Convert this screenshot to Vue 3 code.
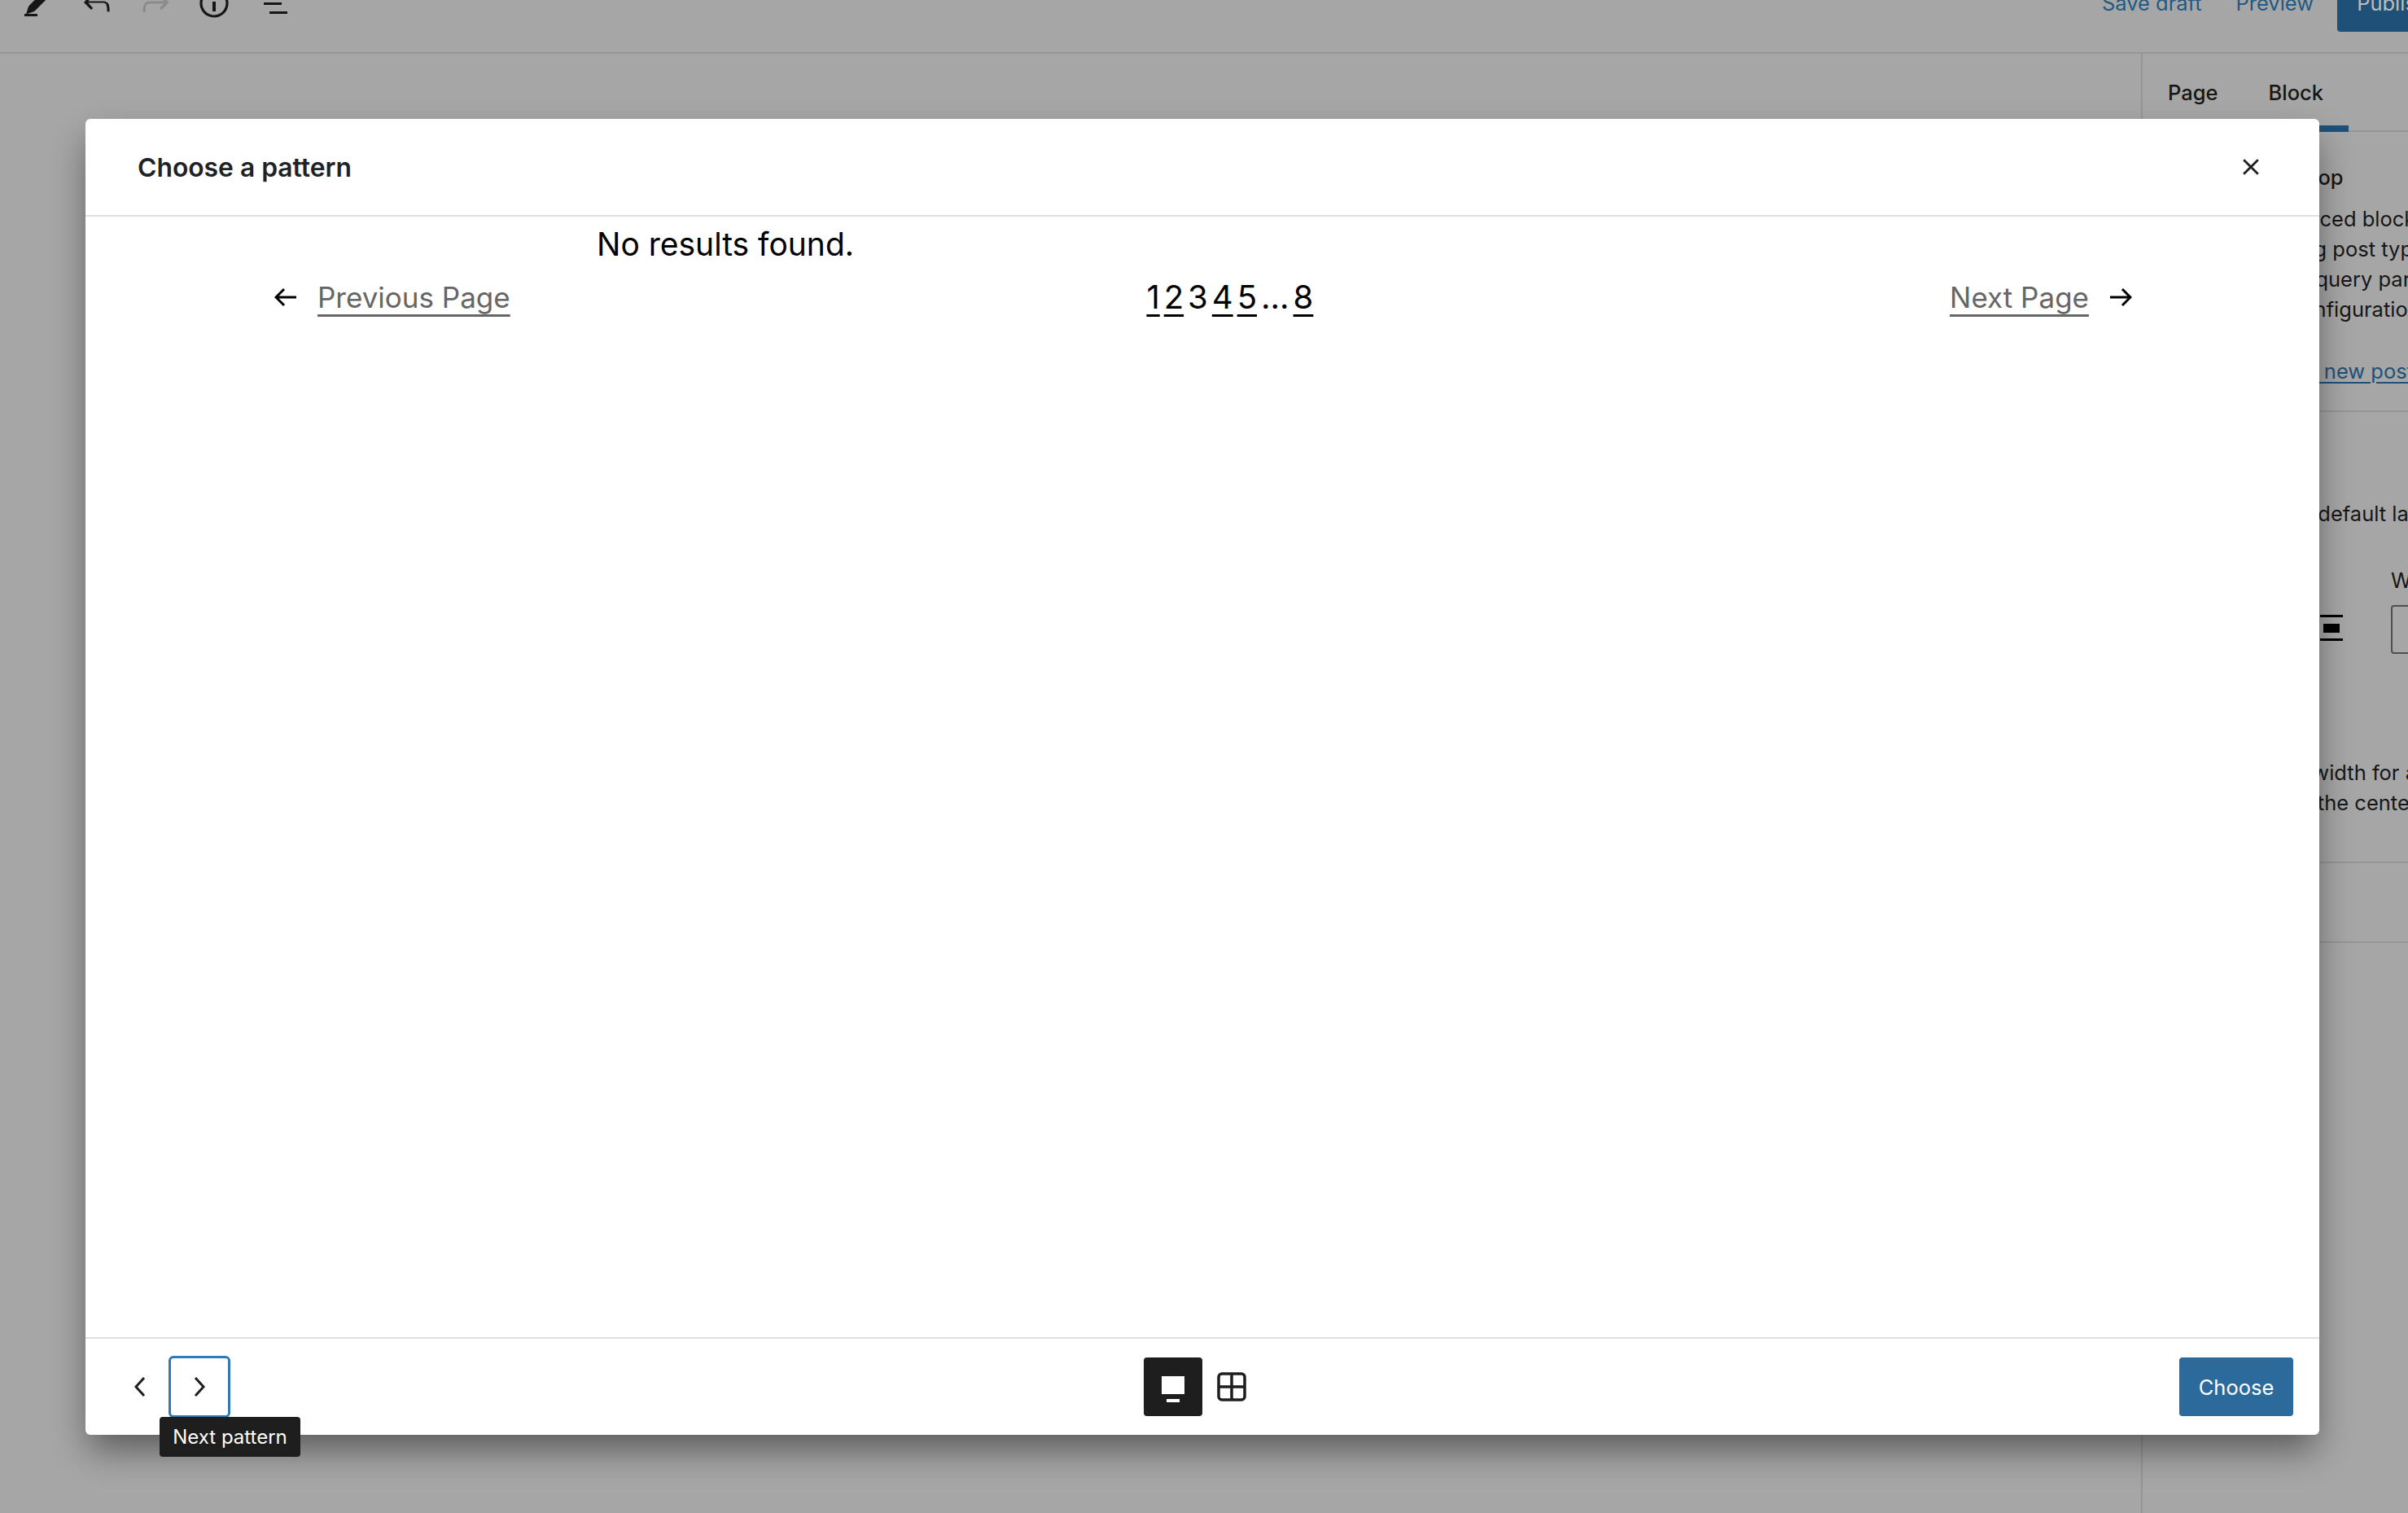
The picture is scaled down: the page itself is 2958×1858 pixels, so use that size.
<script setup>
const toolIcons = [
  { id: 'edit', d: 'M4 20h8v-1.5H4V20zM18.9 3.5c-.6-.6-1.5-.6-2.1 0L7.2 13.1c-.4.4-.7.9-.9 1.5L5 18.7l4.1-1.3c.6-.2 1.1-.5 1.5-.9l9.6-9.6c.6-.6.6-1.5 0-2.1l-1.3-1.3z' },
  { id: 'undo', d: 'M18.3 11.7c-.6-.6-1.4-.9-2.3-.9H6.7l2.9-3.3-1.1-1-4.5 5L8.5 16l1.1-1-2.9-3.2H16c.5 0 .9.2 1.3.5 1 1 1 3.4 1 4.5v.3h1.5v-.2c0-1.5 0-4.3-1.5-5.7z' },
  { id: 'redo', d: 'M15.6 6.5l-1.1 1 2.9 3.3H8c-.9 0-1.7.3-2.3.9-1.4 1.5-1.4 4.2-1.4 5.6v.2h1.5v-.3c0-1.1 0-3.5 1-4.5.3-.3.7-.5 1.3-.5h9.2L14.5 15l1.1 1.1 4.6-4.6-4.6-5z', muted: true },
  { id: 'info', d: 'M12 3.2c-4.8 0-8.8 3.9-8.8 8.8 0 4.8 3.9 8.8 8.8 8.8 4.8 0 8.8-3.9 8.8-8.8 0-4.8-4-8.8-8.8-8.8zm0 16c-4 0-7.2-3.3-7.2-7.2C4.8 8 8 4.8 12 4.8s7.2 3.3 7.2 7.2c0 4-3.2 7.2-7.2 7.2zM11 17h2v-6h-2v6zm0-8h2V7h-2v2z' },
  { id: 'list', d: 'M3 6h11v1.5H3V6Zm3.5 5.5h11V13h-11v-1.5ZM21 17H10v1.5h11V17Z' }
]
const pages = [
  { label: '1', link: true },
  { label: '2', link: true },
  { label: '3', link: false },
  { label: '4', link: true },
  { label: '5', link: true },
  { label: '...', link: false },
  { label: '8', link: true }
]
const descLines = [
  'An advanced block that allows',
  'displaying post types based on',
  'different query parameters and',
  'visual configurations.'
]
</script>

<template>
  <div class="page">
    <header class="topbar">
      <div class="tools">
        <svg v-for="icon in toolIcons" :key="icon.id" class="tool" :class="{ muted: icon.muted }" viewBox="0 0 24 24" width="48" height="48">
          <path :d="icon.d" />
        </svg>
      </div>
      <div class="actions">
        <span class="action">Save draft</span>
        <span class="action">Preview</span>
        <span class="publish">Publish</span>
      </div>
    </header>

    <div class="workspace">
      <main class="canvas"></main>
      <aside class="sidebar">
        <div class="tabs">
          <span class="tab">Page</span>
          <span class="tab active">Block</span>
        </div>
        <section class="card">
          <h2 class="card-title">Query Loop</h2>
          <p v-for="line in descLines" :key="line" class="line">{{ line }}</p>
          <a class="create">Create a new post</a>
        </section>
        <section class="layout-panel">
          <p class="line layout-note">Inner items use default layout</p>
          <div class="width-label">Width</div>
          <div class="layout-row">
            <svg class="justify" viewBox="0 0 28 32" width="28" height="32">
              <rect x="0" y="0" width="28" height="3" />
              <rect x="4" y="11" width="20" height="11" />
              <rect x="0" y="29" width="28" height="3" />
            </svg>
            <div class="width-input"></div>
          </div>
          <p class="line help">Customize the width for all elements that</p>
          <p class="line help-next">are assigned to the center or wide columns.</p>
        </section>
        <section class="empty-panel"></section>
      </aside>
    </div>

    <div class="modal" role="dialog">
      <div class="modal-head">
        <h1 class="modal-title">Choose a pattern</h1>
        <svg class="close" viewBox="0 0 20 20" width="20" height="20">
          <path d="M1.2 1.2l17.6 17.6M18.8 1.2L1.2 18.8" />
        </svg>
      </div>

      <div class="modal-body">
        <p class="empty">No results found.</p>
        <nav class="pager">
          <div class="pager-side">
            <svg class="arrow" viewBox="0 0 28 24" width="28" height="24">
              <path d="M27 12H2M12 2 2 12l10 10" />
            </svg>
            <a class="pager-link">Previous Page</a>
          </div>
          <div class="numbers">
            <span v-for="p in pages" :key="p.label" class="num" :class="{ link: p.link }">{{ p.label }}</span>
          </div>
          <div class="pager-side">
            <a class="pager-link">Next Page</a>
            <svg class="arrow" viewBox="0 0 28 24" width="28" height="24">
              <path d="M1 12h25M16 2l10 10-10 10" />
            </svg>
          </div>
        </nav>
      </div>

      <footer class="modal-foot">
        <div class="foot-left">
          <span class="nav-btn">
            <svg class="chevron prev" viewBox="0 0 14 26" width="14" height="26"><path d="M12 2 2 13l10 11" /></svg>
          </span>
          <span class="nav-btn focused">
            <svg class="chevron" viewBox="0 0 14 26" width="14" height="26"><path d="M2 2l10 11L2 24" /></svg>
            <span class="tooltip">Next pattern</span>
          </span>
        </div>
        <div class="foot-center">
          <span class="view-btn selected">
            <svg viewBox="0 0 28 32" width="28" height="32">
              <rect x="0" y="0" width="28" height="22" fill="#fff" />
              <rect x="6" y="28" width="16" height="4" fill="#fff" />
            </svg>
          </span>
          <span class="view-btn">
            <svg class="grid-icon" viewBox="0 0 36 36" width="36" height="36">
              <rect x="2" y="2" width="32" height="32" rx="4" />
              <path d="M18 2v32M2 18h32" />
            </svg>
          </span>
        </div>
        <div class="foot-right">
          <button class="choose" type="button">Choose</button>
        </div>
      </footer>
    </div>
  </div>
</template>

<style scoped>
.page {
  position: relative;
  width: 2958px;
  height: 1858px;
  overflow: hidden;
  background: #a6a6a6;
  font-family: Inter, "Liberation Sans", sans-serif;
  color: #161616;
  display: flex;
  flex-direction: column;
}
.topbar {
  height: 66px;
  flex: none;
  box-sizing: border-box;
  border-bottom: 2px solid #959595;
  display: flex;
  justify-content: space-between;
  align-items: flex-start;
  overflow: hidden;
}
.tools {
  display: flex;
  gap: 24px;
  padding-left: 22px;
  margin-top: -20px;
}
.tool {
  fill: #161616;
  flex: none;
}
.tool:first-child {
  margin-right: 1px;
}
.tool.muted {
  fill: #8b8b8b;
}
.actions {
  display: flex;
  align-items: flex-start;
  margin-top: -14px;
  margin-right: -49px;
}
.action {
  font-size: 25.5px;
  line-height: 36px;
  color: #205a85;
  margin-right: 42px;
}
.publish {
  background: #1f5077;
  color: #bdbdbd;
  font-size: 25.5px;
  line-height: 36px;
  padding: 0 24px 17px;
  border-radius: 4px;
  margin-left: -13px;
}
.workspace {
  flex: 1;
  display: flex;
  min-height: 0;
}
.canvas {
  flex: 1;
}
.sidebar {
  width: 328px;
  flex: none;
  box-sizing: border-box;
  border-left: 2px solid #959595;
  display: flex;
  flex-direction: column;
}
.tabs {
  height: 96px;
  flex: none;
  box-sizing: border-box;
  border-bottom: 2px solid #959595;
  display: flex;
}
.tab {
  padding: 0 31px;
  line-height: 96px;
  font-size: 25.5px;
  font-weight: 500;
  white-space: nowrap;
  color: #161616;
  box-sizing: border-box;
}
.tab.active {
  height: 96px;
  border-bottom: 8px solid #1f5077;
}
.card {
  padding: 38px 0 30px 104px;
  border-bottom: 2px solid #959595;
  width: 700px;
  box-sizing: border-box;
}
.card-title {
  margin: 0 0 14px;
  font-size: 25.5px;
  line-height: 36px;
  font-weight: 500;
  color: #161616;
}
.line {
  margin: 0;
  font-size: 25.5px;
  line-height: 37px;
  white-space: nowrap;
  color: #161616;
}
.create {
  display: block;
  margin: 39px 0 0 10px;
  font-size: 25.5px;
  line-height: 37px;
  color: #1f5077;
  text-decoration: underline;
  text-underline-offset: 4px;
}
.layout-panel {
  padding: 106px 0 54px 32px;
  border-bottom: 2px solid #959595;
  width: 700px;
  box-sizing: border-box;
}
.layout-note {
  margin-left: -8px;
}
.width-label {
  margin: 46px 0 0 273px;
  font-size: 25.5px;
  line-height: 36px;
}
.layout-row {
  display: flex;
  align-items: center;
  padding-left: 186px;
  margin-top: 12px;
}
.justify {
  fill: #000;
  flex: none;
  margin-top: -5px;
}
.width-input {
  margin-left: 59px;
  width: 200px;
  height: 60px;
  flex: none;
  box-sizing: border-box;
  border: 2px solid #4f4f4f;
  border-radius: 4px;
}
.help {
  margin-top: 127px;
  margin-left: -4px;
}
.help-next {
  margin-left: -9px;
}
.empty-panel {
  height: 96px;
  flex: none;
  border-bottom: 2px solid #959595;
}
.modal {
  position: absolute;
  left: 105px;
  top: 146px;
  width: 2744px;
  height: 1616px;
  background: #fff;
  border-radius: 6px;
  box-shadow: 0 22px 44px -4px rgba(0, 0, 0, 0.45);
  display: flex;
  flex-direction: column;
}
.modal-head {
  height: 120px;
  flex: none;
  box-sizing: border-box;
  border-bottom: 2px solid #e0e0e0;
  padding: 0 74px 0 64px;
  display: flex;
  align-items: center;
  justify-content: space-between;
}
.modal-title {
  margin: 2px 0 0;
  font-size: 31.8px;
  line-height: 40px;
  font-weight: 600;
  color: #1e2327;
}
.close {
  fill: none;
  stroke: #1e1e1e;
  stroke-width: 2.8;
}
.modal-body {
  flex: 1;
  min-height: 0;
}
.empty {
  margin: 0;
  padding: 10px 0 0 628px;
  font-size: 39px;
  line-height: 48px;
  color: #000;
}
.pager {
  display: flex;
  justify-content: space-between;
  align-items: center;
  padding: 0 230px 0 232px;
  height: 50px;
  margin-top: 16px;
}
.pager-side {
  display: flex;
  align-items: center;
  gap: 25px;
}
.arrow {
  fill: none;
  stroke: #000;
  stroke-width: 3;
  flex: none;
}
.pager-link {
  font-size: 35px;
  line-height: 50px;
  color: #666;
  text-decoration: underline;
  text-decoration-thickness: 3px;
  text-underline-offset: 8px;
}
.numbers {
  display: flex;
  gap: 5px;
}
.num {
  font-size: 40px;
  line-height: 50px;
  color: #000;
}
.num.link {
  text-decoration: underline;
  text-decoration-thickness: 3px;
  text-underline-offset: 7px;
}
.modal-foot {
  height: 120px;
  flex: none;
  box-sizing: border-box;
  border-top: 2px solid #e0e0e0;
  padding: 0 32px;
  display: grid;
  grid-template-columns: 1fr auto 1fr;
  align-items: center;
}
.foot-left {
  display: flex;
  margin-left: -6px;
}
.nav-btn {
  position: relative;
  width: 76px;
  height: 76px;
  box-sizing: border-box;
  border-radius: 6px;
  display: flex;
  align-items: center;
  justify-content: center;
}
.nav-btn.focused {
  border: 3px solid #2f7ab8;
}
.chevron {
  fill: none;
  stroke: #1e1e1e;
  stroke-width: 3;
}
.chevron.prev {
  margin-left: 6px;
}
.tooltip {
  position: absolute;
  left: -14px;
  top: 72px;
  width: 173px;
  height: 49px;
  box-sizing: border-box;
  border-radius: 4px;
  background: #1e1e1e;
  color: #fff;
  font-size: 24px;
  line-height: 49px;
  text-align: center;
  white-space: nowrap;
}
.foot-center {
  display: flex;
}
.view-btn {
  width: 72px;
  height: 72px;
  border-radius: 4px;
  display: flex;
  align-items: center;
  justify-content: center;
}
.view-btn.selected {
  background: #1e1e1e;
}
.view-btn.selected svg {
  margin-top: 6px;
}
.grid-icon {
  fill: none;
  stroke: #1e1e1e;
  stroke-width: 3.5;
}
.foot-right {
  display: flex;
  justify-content: flex-end;
}
.choose {
  width: 140px;
  height: 72px;
  border: 0;
  border-radius: 4px;
  background: #2c6a9c;
  color: #fff;
  font-family: inherit;
  font-size: 25.5px;
  padding: 0;
}
</style>

<style>
html, body {
  margin: 0;
  background: #a6a6a6;
}
</style>
